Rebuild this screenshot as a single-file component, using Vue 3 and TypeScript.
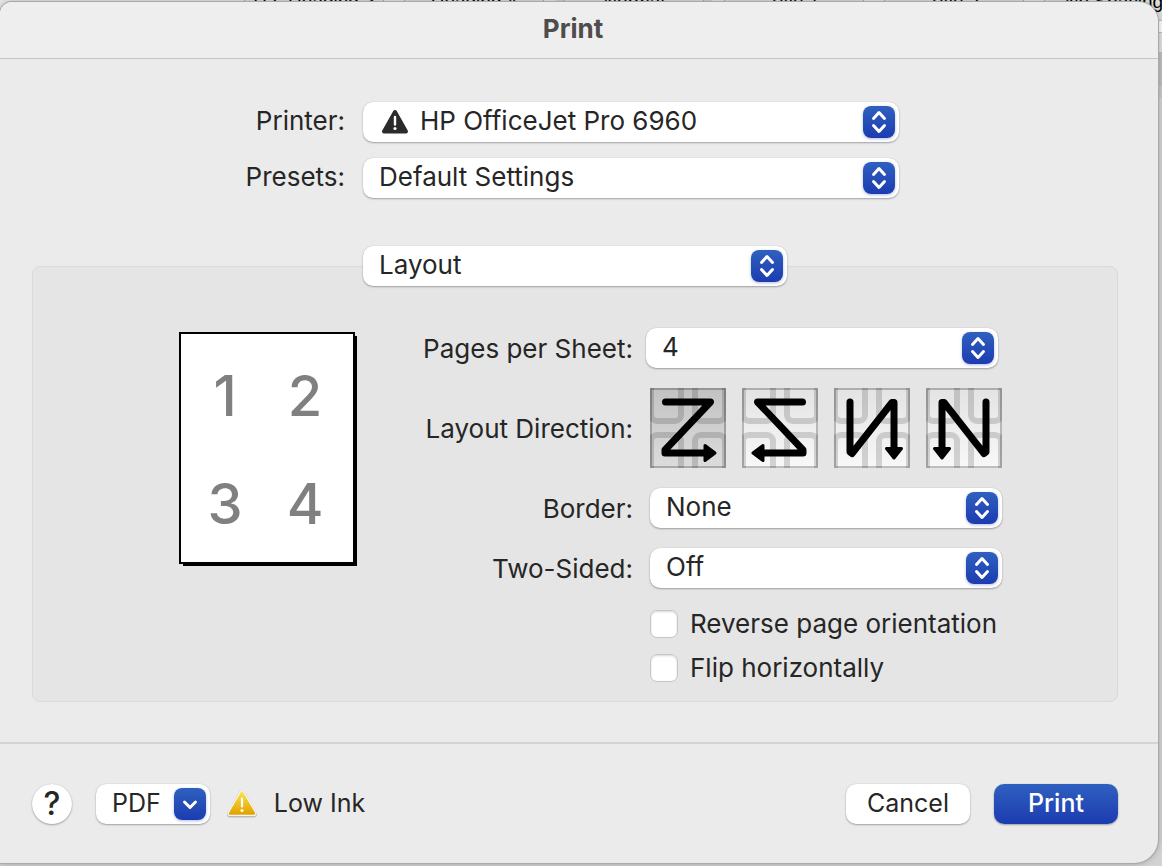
<script setup lang="ts">
import { ref } from 'vue'

interface Direction {
  id: string
  label: string
  line: string
  head: string
  mirrored: boolean
}

const zLine = 'M15.500 14H60.500L15 62V65H56'
const zHead = 'M55 57.500L65 65L55 72.500Z'
const nLine = 'M16 14V64L18 65.500L58 14.500H60V60'
const nHead = 'M52.500 60.500H67.500L60 70Z'

const directions: Direction[] = [
  { id: 'z', label: 'Left to right, then down', line: zLine, head: zHead, mirrored: false },
  { id: 's', label: 'Right to left, then down', line: zLine, head: zHead, mirrored: true },
  { id: 'n', label: 'Down, then left to right', line: nLine, head: nHead, mirrored: false },
  { id: 'm', label: 'Down, then right to left', line: nLine, head: nHead, mirrored: true },
]

const styles: string[] = ['H2_Heading 3', 'Heading 4', 'Normal', 'Title 1', 'Title 2', 'No Spacing']

const printer = ref('HP OfficeJet Pro 6960')
const preset = ref('Default Settings')
const section = ref('Layout')
const pages = ref(4)
const direction = ref('z')
const border = ref('None')
const twoSided = ref('Off')
const reverse = ref(false)
const flip = ref(false)
</script>

<template>
  <div class="stage">
    <div class="ribbon" aria-hidden="true">
      <span v-for="s in styles" :key="s" class="style-item" :class="{ current: s === 'Normal' }">{{ s }}</span>
    </div>
    <main class="dialog">
      <header class="titlebar"><h1>Print</h1></header>

      <section class="top-form">
        <label for="printer">Printer:</label>
        <div class="popup with-icon">
          <select id="printer" v-model="printer"><option>HP OfficeJet Pro 6960</option></select>
          <svg class="alert" width="28" height="26" viewBox="0 0 28 26">
            <path d="M14 3L25 22.500H3Z" fill="#2b2b2b" stroke="#2b2b2b" stroke-width="4" stroke-linejoin="round" />
            <path d="M14 8V15.500" stroke="#fff" stroke-width="2.400" stroke-linecap="round" />
            <circle cx="14" cy="19.500" r="1.600" fill="#fff" />
          </svg>
          <svg class="badge" viewBox="0 0 32 32"><path d="M10.500 12.500L16 6.500L21.500 12.500M10.500 19.500L16 25.500L21.500 19.500" /></svg>
        </div>
        <label for="presets">Presets:</label>
        <div class="popup">
          <select id="presets" v-model="preset"><option>Default Settings</option></select>
          <svg class="badge" viewBox="0 0 32 32"><path d="M10.500 12.500L16 6.500L21.500 12.500M10.500 19.500L16 25.500L21.500 19.500" /></svg>
        </div>
      </section>

      <section class="panel">
        <div class="popup section-popup">
          <select v-model="section" aria-label="Options section"><option>Layout</option></select>
          <svg class="badge" viewBox="0 0 32 32"><path d="M10.500 12.500L16 6.500L21.500 12.500M10.500 19.500L16 25.500L21.500 19.500" /></svg>
        </div>
        <div class="panel-body">
          <div class="sheet">
            <span v-for="n in pages" :key="n">{{ n }}</span>
          </div>
          <div class="fields">
            <div class="row first">
              <label for="pages">Pages per Sheet:</label>
              <div class="popup">
                <select id="pages" v-model="pages"><option :value="4">4</option></select>
                <svg class="badge" viewBox="0 0 32 32"><path d="M10.500 12.500L16 6.500L21.500 12.500M10.500 19.500L16 25.500L21.500 19.500" /></svg>
              </div>
            </div>
            <div class="row">
              <span id="direction-label" class="label">Layout Direction:</span>
              <div class="tiles" role="group" aria-labelledby="direction-label">
                <button
                  v-for="d in directions"
                  :key="d.id"
                  type="button"
                  class="tile"
                  :class="{ selected: direction === d.id }"
                  :aria-label="d.label"
                  :aria-pressed="direction === d.id"
                  @click="direction = d.id"
                >
                  <svg width="76" height="80" viewBox="0 0 76 80">
                    <g fill="none" stroke="#000" stroke-opacity=".15" stroke-width="6">
                      <rect x="1" y="-12" width="30" height="45" rx="6" />
                      <rect x="45" y="-12" width="30" height="45" rx="6" />
                      <rect x="1" y="47" width="30" height="45" rx="6" />
                      <rect x="45" y="47" width="30" height="45" rx="6" />
                    </g>
                    <path d="M1 0V80M75 0V80M0 1H76M0 79H76" stroke="#000" stroke-opacity=".23" stroke-width="2" />
                    <g :transform="d.mirrored ? 'translate(76 0) scale(-1 1)' : undefined" stroke="#000" stroke-linejoin="round" stroke-linecap="round">
                      <path :d="d.line" fill="none" stroke-width="7" />
                      <path :d="d.head" stroke-width="3" />
                    </g>
                  </svg>
                </button>
              </div>
            </div>
            <div class="row">
              <label for="border">Border:</label>
              <div class="popup">
                <select id="border" v-model="border"><option>None</option></select>
                <svg class="badge" viewBox="0 0 32 32"><path d="M10.500 12.500L16 6.500L21.500 12.500M10.500 19.500L16 25.500L21.500 19.500" /></svg>
              </div>
            </div>
            <div class="row">
              <label for="two-sided">Two-Sided:</label>
              <div class="popup">
                <select id="two-sided" v-model="twoSided"><option>Off</option></select>
                <svg class="badge" viewBox="0 0 32 32"><path d="M10.500 12.500L16 6.500L21.500 12.500M10.500 19.500L16 25.500L21.500 19.500" /></svg>
              </div>
            </div>
            <div class="checks">
              <label><input v-model="reverse" type="checkbox" /><span>Reverse page orientation</span></label>
              <label><input v-model="flip" type="checkbox" /><span>Flip horizontally</span></label>
            </div>
          </div>
        </div>
      </section>

      <footer class="actions">
        <button type="button" class="help" aria-label="Help">?</button>
        <button type="button" class="pdf">
          <span>PDF</span>
          <svg class="badge" viewBox="0 0 32 32"><path d="M10.500 14L16 19.500L21.500 14" /></svg>
        </button>
        <div class="ink">
          <svg width="32" height="32" viewBox="0 0 32 32">
            <defs>
              <linearGradient id="ink-fill" x1="0" y1="0" x2="0" y2="1">
                <stop offset="0" stop-color="#fbe04a" />
                <stop offset="1" stop-color="#e3a400" />
              </linearGradient>
            </defs>
            <path d="M16 5L28 26.500H4Z" fill="#bbb" stroke="#bbb" stroke-width="6" stroke-linejoin="round" />
            <path d="M16 4.500L28 25.500H4Z" fill="#fff" stroke="#f7f7f7" stroke-width="5" stroke-linejoin="round" />
            <path d="M16 4.500L28 25.500H4Z" fill="url(#ink-fill)" stroke="url(#ink-fill)" stroke-width="2.500" stroke-linejoin="round" />
            <path d="M16 10.500V18.500" stroke="#fff" stroke-width="2.200" stroke-linecap="round" />
            <circle cx="16" cy="22.500" r="1.500" fill="#fff" />
          </svg>
          <span>Low Ink</span>
        </div>
        <button type="button" class="push cancel">Cancel</button>
        <button type="button" class="push primary">Print</button>
      </footer>
    </main>
  </div>
</template>

<style>
body {
  margin: 0;
  background: #d2d2d2;
}
</style>

<style scoped>
* {
  box-sizing: border-box;
}
.stage {
  position: relative;
  min-height: 100vh;
  padding: 2px 4px 3px 0;
  overflow: hidden;
  font: 400 26px/32px Inter, "Liberation Sans", sans-serif;
  color: #262626;
}
.ribbon {
  position: absolute;
  inset: -12px 0 auto 0;
  height: 110px;
  padding-left: 244px;
  display: grid;
  grid-template-columns: repeat(6, 140px);
  column-gap: 20px;
  background: linear-gradient(
    #e6e6e6 32px,
    #bbb 32px 33px,
    #fafafa 33px 44px,
    #bbb 44px 45px,
    #dedede 45px 64px,
    #bdbdbd 64px 98px,
    #c8c8c8 98px
  );
  color: #000;
  font: 400 19px/28px "Liberation Sans", sans-serif;
  text-align: center;
  white-space: nowrap;
}
.style-item {
  height: 32px;
  background: #dcdcdc;
  border: solid #a8a8a8;
  border-width: 0 1px;
}
.style-item.current {
  box-shadow: -9px 0 0 -1px #c3d2e6, 9px 0 0 -1px #c3d2e6;
}
.dialog {
  position: relative;
  display: flex;
  flex-direction: column;
  background: #ebebeb;
  border-radius: 12px 20px 24px 0;
  box-shadow: 0 0 0 1px #a9a9a9, 0 0 6px rgba(0, 0, 0, 0.3);
  overflow: hidden;
}
.titlebar {
  height: 57px;
  padding: 11px 44px 0 32px;
  background: #eee;
  border-bottom: 1px solid #c4c4c4;
  text-align: center;
}
h1 {
  margin: 0;
  font-size: 26px;
  font-weight: 700;
  line-height: 32px;
  color: #4d4d4d;
}
.top-form {
  display: grid;
  grid-template-columns: 102px minmax(0, 536px);
  gap: 16px 18px;
  justify-content: center;
  padding: 43px 48px 0 32px;
}
.top-form label,
.row label,
.label {
  align-self: center;
  text-align: right;
  white-space: nowrap;
}
.top-form label {
  padding-bottom: 2px;
}
.row label,
.label {
  padding-top: 2px;
}
.popup {
  display: grid;
  align-items: center;
  min-width: 0;
}
.popup > * {
  grid-area: 1 / 1;
}
select,
.pdf,
.push,
.help {
  appearance: none;
  margin: 0;
  border: 0;
  border-radius: 10px;
  background: #fff;
  box-shadow: 0 1px 2px rgba(0, 0, 0, 0.3), 0 0 1px rgba(0, 0, 0, 0.2);
  color: inherit;
  font: inherit;
}
select {
  width: 100%;
  height: 40px;
  padding: 0 44px 2px 16px;
}
.with-icon select {
  padding-left: 57px;
}
.alert {
  justify-self: start;
  margin-left: 18px;
  pointer-events: none;
}
.badge {
  width: 32px;
  height: 32px;
  margin-right: 4px;
  justify-self: end;
  border-radius: 8px;
  background: linear-gradient(#2f60c0, #1c3cb0);
  box-shadow: 0 1px 3px rgba(28, 60, 176, 0.35);
  fill: none;
  stroke: #fff;
  stroke-width: 3;
  stroke-linecap: round;
  stroke-linejoin: round;
  pointer-events: none;
}
.panel {
  margin: 68px 40px 0 32px;
  background: #e5e5e5;
  border: 1px solid #dadada;
  border-radius: 8px;
}
.section-popup {
  width: 424px;
  max-width: 100%;
  margin: -21px auto 0;
}
.panel-body {
  display: flex;
  justify-content: center;
  gap: 66px;
  padding: 42px 0 17px 31px;
}
.sheet {
  width: 176px;
  height: 232px;
  margin-top: 4px;
  padding: 4px 4px 0 0;
  display: grid;
  grid-template: repeat(2, 108px) / repeat(2, 80px);
  place-content: center;
  place-items: center;
  flex: none;
  background: #fff;
  border: 2px solid #000;
  box-shadow: 3px 3px 0 -1px #000;
  color: #808080;
  font-size: 56px;
  font-weight: 500;
  line-height: 64px;
}
.fields {
  display: flex;
  flex-direction: column;
  gap: 20px;
}
.row {
  display: grid;
  grid-template-columns: 212px 352px;
  column-gap: 17px;
}
.row.first {
  column-gap: 13px;
}
.tiles {
  display: flex;
  gap: 16px;
}
.tile {
  display: block;
  width: 76px;
  height: 80px;
  padding: 0;
  border: 0;
  background: linear-gradient(#e3e3e3, #f8f8f8);
}
.tile.selected {
  background: linear-gradient(#c2c2c2, #dcdcdc);
}
.tile svg {
  display: block;
}
.checks {
  display: grid;
  gap: 12px;
  padding-left: 229px;
}
.checks label {
  display: flex;
  align-items: center;
  gap: 12px;
  white-space: nowrap;
}
.checks input {
  appearance: none;
  width: 28px;
  height: 28px;
  margin: 0;
  background: #fff;
  border: 1px solid #c6c6c6;
  border-radius: 7px;
  box-shadow: inset 0 1px 2px rgba(0, 0, 0, 0.15);
}
.actions {
  display: flex;
  align-items: center;
  gap: 24px;
  margin-top: 40px;
  padding: 40px 40px 39px 32px;
  border-top: 2px solid #d4d4d4;
  font-size: 25px;
}
.help {
  width: 40px;
  height: 40px;
  padding: 0;
  border-radius: 50%;
  font-size: 32px;
  font-weight: 500;
}
.pdf {
  display: flex;
  align-items: center;
  gap: 13px;
  height: 40px;
  padding: 0 0 0 16px;
}
.pdf span,
.ink span {
  padding-bottom: 2px;
}
.ink {
  display: flex;
  align-items: center;
  gap: 16px;
  margin-left: -8px;
}
.push {
  width: 124px;
  height: 40px;
  padding: 0 0 2px;
}
.cancel {
  margin-left: auto;
}
.primary {
  background: linear-gradient(#2f60c0, #1c3cb0);
  color: #fff;
  font-weight: 500;
}
</style>
